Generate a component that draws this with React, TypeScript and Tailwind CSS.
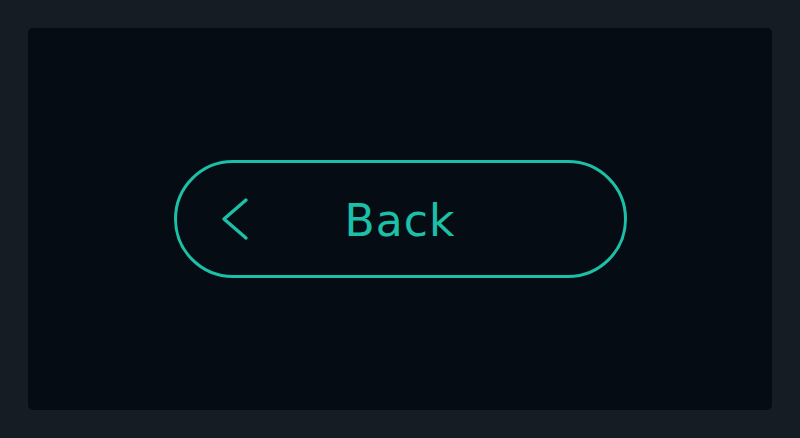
import React from 'react'

function ChevronLeft() {
  return (
    <svg width="28" height="46" viewBox="0 0 28 46" fill="none" stroke="currentColor" strokeWidth="3.4" strokeLinecap="round" strokeLinejoin="round">
      <path d="M25 3 L3 22 L25 41" />
    </svg>
  )
}

export default function App() {
  return (
    <div className="w-[800px] h-[438px] bg-[#161c23] p-[28px] flex">
      <div className="flex-1 bg-[#050c13] rounded-[5px] flex items-center justify-center">
        <button
          type="button"
          className="w-[453px] h-[118px] rounded-full border-[3px] border-[#1cc0a8] text-[#1cc0a8] grid grid-cols-[1fr_auto_1fr] items-center pl-[44px]"
        >
          <span className="flex items-center justify-start pt-[1px]">
            <ChevronLeft />
          </span>
          <span className="text-[44px] leading-none tracking-[1px] font-['DejaVu_Sans',sans-serif] -ml-[44px] pt-[3px]">Back</span>
          <span />
        </button>
      </div>
    </div>
  )
}
